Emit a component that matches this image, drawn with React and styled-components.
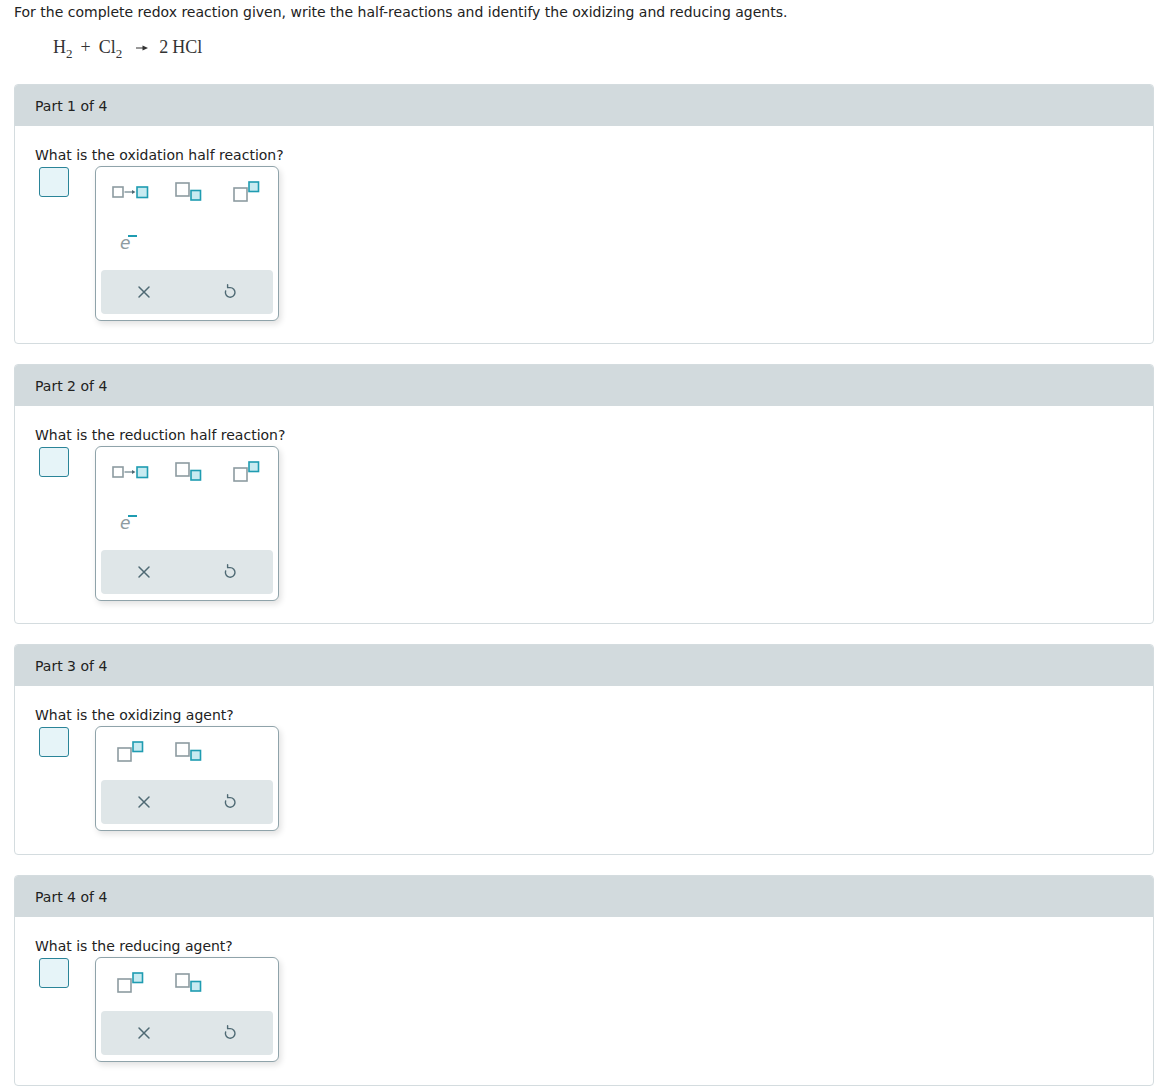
import React from "react";
import styled, { createGlobalStyle } from "styled-components";

const GlobalStyle = createGlobalStyle`
  body {
    margin: 0;
    background: #fff;
    font-family: "DejaVu Sans", Verdana, sans-serif;
    color: #222;
  }
`;

const parts = [
  { question: "What is the oxidation half reaction?", full: true },
  { question: "What is the reduction half reaction?", full: true },
  { question: "What is the oxidizing agent?", full: false },
  { question: "What is the reducing agent?", full: false },
];

const GRAY = "#8d9ba1";
const TEAL = "#1f9cb1";
const TEAL_FILL = "#c8ebf1";

const ArrowIcon = () => (
  <svg width="37" height="13" viewBox="0 0 37 13">
    <rect x="1" y="1" width="10" height="10" fill="#fff" stroke={GRAY} strokeWidth="1.6" />
    <line x1="12.5" y1="6" x2="22" y2="6" stroke="#4f6a74" strokeWidth="1.2" />
    <polygon points="23.5,6 20,4 20,8" fill="#4f6a74" />
    <rect x="25" y="1" width="10.5" height="10.5" fill={TEAL_FILL} stroke={TEAL} strokeWidth="1.6" />
  </svg>
);

const SubIcon = () => (
  <svg width="27" height="20" viewBox="0 0 27 20">
    <rect x="1" y="1" width="13" height="13" fill="#fff" stroke={GRAY} strokeWidth="1.6" />
    <rect x="16" y="8.5" width="9.5" height="9.5" fill={TEAL_FILL} stroke={TEAL} strokeWidth="1.6" />
  </svg>
);

const SupIcon = () => (
  <svg width="27" height="22" viewBox="0 0 27 22">
    <rect x="1" y="7" width="13" height="13" fill="#fff" stroke={GRAY} strokeWidth="1.6" />
    <rect x="16" y="1" width="9.5" height="9.5" fill={TEAL_FILL} stroke={TEAL} strokeWidth="1.6" />
  </svg>
);

const ElectronIcon = () => (
  <svg width="22" height="22" viewBox="0 0 22 22">
    <text x="1" y="18" fontFamily="'DejaVu Sans', sans-serif" fontStyle="italic" fontSize="17" fill="#8d9ba1">
      e
    </text>
    <line x1="9" y1="5" x2="18" y2="5" stroke={TEAL} strokeWidth="1.8" />
  </svg>
);

const ClearIcon = () => (
  <svg width="14" height="14" viewBox="0 0 14 14">
    <path d="M2 2 L12 12 M12 2 L2 12" stroke="#4f6a74" strokeWidth="1.5" strokeLinecap="round" />
  </svg>
);

const UndoIcon = () => (
  <svg width="14" height="16" viewBox="0 0 14 16">
    <path
      d="M4.6 3.6 L7.2 3.6 A4.8 4.8 0 1 1 2.6 7"
      fill="none"
      stroke="#4f6a74"
      strokeWidth="1.4"
      strokeLinecap="round"
    />
    <path d="M4.6 3.6 L4.6 0.8" fill="none" stroke="#4f6a74" strokeWidth="1.4" strokeLinecap="round" />
  </svg>
);

const ReactionArrow = () => (
  <svg width="12" height="8" viewBox="0 0 12 8">
    <line x1="0" y1="4" x2="8" y2="4" stroke="#333" strokeWidth="1" />
    <polygon points="12,4 6.5,1.5 6.5,6.5" fill="#333" />
  </svg>
);

export default function App() {
  return (
    <Page>
      <GlobalStyle />
      <Prompt>
        For the complete redox reaction given, write the half-reactions and identify the
        oxidizing and reducing agents.
      </Prompt>
      <Equation>
        H<sub>2</sub>
        <Op>+</Op>
        Cl<sub>2</sub>
        <ReactionArrow />
        <Coef>2</Coef>HCl
      </Equation>
      {parts.map((part, i) => (
        <Card key={i}>
          <CardHeader>
            Part {i + 1} of {parts.length}
          </CardHeader>
          <CardBody $short={!part.full}>
            <Question>{part.question}</Question>
            <AnswerRow>
              <AnswerBox />
              <Palette>
                <IconGrid>
                  {part.full ? (
                    <>
                      <IconCell>
                        <ArrowIcon />
                      </IconCell>
                      <IconCell>
                        <SubIcon />
                      </IconCell>
                      <IconCell>
                        <SupIcon />
                      </IconCell>
                      <IconCell>
                        <ElectronIcon />
                      </IconCell>
                    </>
                  ) : (
                    <>
                      <IconCell>
                        <SupIcon />
                      </IconCell>
                      <IconCell>
                        <SubIcon />
                      </IconCell>
                    </>
                  )}
                </IconGrid>
                <Toolbar>
                  <ToolButton>
                    <ClearIcon />
                  </ToolButton>
                  <ToolButton>
                    <UndoIcon />
                  </ToolButton>
                </Toolbar>
              </Palette>
            </AnswerRow>
          </CardBody>
        </Card>
      ))}
    </Page>
  );
}

const Page = styled.div`
  width: 1140px;
  padding: 3px 0 4px 14px;
`;

const Prompt = styled.div`
  font-size: 14px;
  line-height: 18px;
`;

const Equation = styled.div`
  margin: 15px 0 0 39px;
  height: 48px;
  font-family: "Liberation Serif", "Times New Roman", serif;
  font-size: 18px;
  line-height: 22px;
  color: #333;
  white-space: nowrap;

  sub {
    font-size: 13px;
    vertical-align: -5px;
    line-height: 0;
  }

  svg {
    margin: 0 11px 0 14px;
    vertical-align: 1px;
  }
`;

const Op = styled.span`
  margin: 0 8px 0 8px;
`;

const Coef = styled.span`
  margin-right: 4px;
`;

const Card = styled.section`
  border: 1px solid #d4dcdf;
  border-radius: 4px;
  margin-bottom: 20px;
  overflow: hidden;
`;

const CardHeader = styled.div`
  height: 41px;
  display: flex;
  align-items: center;
  padding-left: 20px;
  background: #d2dadd;
  font-size: 14px;
`;

const CardBody = styled.div`
  padding: 20px 20px ${(p) => (p.$short ? "23px" : "22px")};
`;

const Question = styled.div`
  font-size: 14px;
  line-height: 18px;
`;

const AnswerRow = styled.div`
  display: flex;
  align-items: flex-start;
  gap: 26px;
  margin-top: 2px;
`;

const AnswerBox = styled.div`
  width: 28px;
  height: 28px;
  margin: 1px 0 0 4px;
  border: 1px solid #2a8498;
  border-radius: 3px;
  background: #e6f4f8;
`;

const Palette = styled.div`
  width: 172px;
  padding: 0 5px 6px;
  border: 1px solid #8fa3aa;
  border-radius: 6px;
  background: #fff;
  box-shadow: 2px 3px 6px rgba(0, 0, 0, 0.12);
`;

const IconGrid = styled.div`
  display: grid;
  grid-template-columns: repeat(3, 58px);
  grid-auto-rows: 50px;
`;

const IconCell = styled.div`
  display: flex;
  align-items: center;
  justify-content: center;
`;

const Toolbar = styled.div`
  display: grid;
  grid-template-columns: 1fr 1fr;
  height: 44px;
  margin-top: 3px;
  border-radius: 4px;
  background: #dfe6e8;
`;

const ToolButton = styled.div`
  display: flex;
  align-items: center;
  justify-content: center;
`;
